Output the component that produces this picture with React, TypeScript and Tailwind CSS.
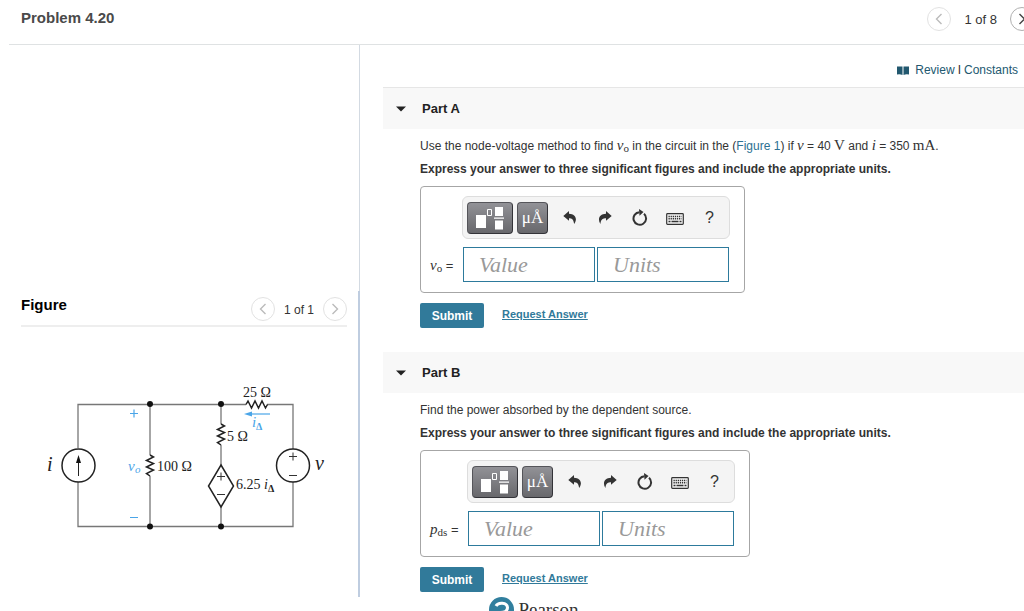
import { clsx } from "clsx";
import React from "react";

const Pager = ({
  label,
  nextActive = false,
  className,
}: {
  label: string;
  nextActive?: boolean;
  className?: string;
}) => {
  return (
    <nav className={clsx("flex items-center text-[#333333]", className)}>
      <button
        aria-label="Previous"
        className="size-6 rounded-full border border-[#e2e2e2] text-[#bbbbbb] flex items-center justify-center"
      >
        <svg width="8" height="12" viewBox="0 0 8 12" fill="none" stroke="currentColor" strokeWidth="1.4">
          <path d="M6.500 1 1.500 6l5 5" />
        </svg>
      </button>
      <span className="pt-0.5">{label}</span>
      <button
        aria-label="Next"
        className={clsx(
          "size-6 rounded-full border flex items-center justify-center",
          nextActive
            ? "border-[#b0b0b0] text-[#444444]"
            : "border-[#e2e2e2] text-[#bbbbbb]"
        )}
      >
        <svg width="8" height="12" viewBox="0 0 8 12" fill="none" stroke="currentColor" strokeWidth="1.4">
          <path d="M1.500 1l5 5-5 5" />
        </svg>
      </button>
    </nav>
  );
};

const MathVar = ({ children, sub }: { children: string; sub?: string }) => (
  <span className="font-['Liberation_Serif',serif] text-[15px] leading-none">
    <i>{children}</i>
    {sub && <span className="relative top-0.5 text-[11px]">{sub}</span>}
  </span>
);

const Unit = ({ children }: { children: string }) => (
  <span className="font-['Liberation_Serif',serif] text-[15px] leading-none">
    {children}
  </span>
);

const toolButton = "w-[35px] h-8 flex items-center justify-center text-[#333333]";
const darkButton =
  "h-8 rounded-[4px] border border-[#55555a] border-b-[#333338] border-r-[#333338] bg-gradient-to-b from-[#929297] to-[#68686c] text-white flex items-center justify-center";

const Toolbar = () => {
  return (
    <div className="flex items-center h-[43px] w-[268px] pl-1 rounded-[6px] border border-[#dddddd] bg-[#f4f4f4]">
      <button aria-label="Templates" className={clsx(darkButton, "w-[46px] mr-1")}>
        <svg width="28" height="26" viewBox="0 0 28 26">
          <path d="M0 10h10v13H0z" fill="white" />
          <path d="M11.500 4.500h4v6h-4z" fill="none" stroke="white" />
          <path d="M19 2h8v9h-8zM18 12.500h10v1.200H18zM19 15.500h8v9h-8z" fill="white" />
        </svg>
      </button>
      <button
        aria-label="Units"
        className={clsx(
          darkButton,
          "w-[31px] mr-1 font-['Liberation_Serif',serif] text-[17px]"
        )}
      >
        μÅ
      </button>
      <button aria-label="Undo" className={toolButton}>
        <svg width="14" height="14" viewBox="0 0 14 14" fill="currentColor">
          <path d="M6 0 0.300 5 6 9.800V7.200C8.800 7.200 10.400 8.200 11.200 13 14.800 8 12.500 3 6 2.800Z" />
        </svg>
      </button>
      <button aria-label="Redo" className={toolButton}>
        <svg width="14" height="14" viewBox="0 0 14 14" fill="currentColor">
          <path d="M8 0 13.700 5 8 9.800V7.200C5.200 7.200 2.800 8.200 2.400 13-0.800 8 1.500 3 8 2.800Z" />
        </svg>
      </button>
      <button aria-label="Reset" className={toolButton}>
        <svg width="16" height="18" viewBox="0 0 16 18">
          <path
            d="M12 4.800A6.300 6.300 0 1 1 7.500 3.200"
            fill="none"
            stroke="currentColor"
            strokeWidth="2"
          />
          <path d="M7 0 11.500 3 7.500 6.800Z" fill="currentColor" />
        </svg>
      </button>
      <button aria-label="Keyboard" className={toolButton}>
        <svg
          width="18"
          height="12"
          viewBox="0 0 18 12"
          className="mt-0.5"
          fill="none"
          stroke="currentColor"
        >
          <rect x="0.7" y="0.7" width="16.6" height="10.6" rx="0.8" strokeWidth="1.2" />
          <path d="M2.5 3.5h13M2.5 5.7h13" strokeWidth="1.4" strokeDasharray="1.3 0.8" />
          <path d="M2.5 8.5h2M5.5 8.5h7M13.5 8.5h2" strokeWidth="1.4" />
        </svg>
      </button>
      <button aria-label="Help" className={clsx(toolButton, "text-base")}>
        ?
      </button>
    </div>
  );
};

const fieldClass =
  "w-[132px] h-[35px] border border-[#2d7a9c] bg-white pl-[15px] font-['Liberation_Serif',serif] italic text-[22px] text-[#333333] placeholder:text-[#999999] outline-none";

const AnswerBox = ({
  id,
  symbol,
  sub,
  labelClass,
}: {
  id: string;
  symbol: string;
  sub: string;
  labelClass: string;
}) => {
  return (
    <div className="flex items-end w-fit h-[107px] mt-[5px] pt-[9px] pb-[10px] pl-[9px] pr-[14px] rounded-[4px] border border-[#a6a6a6]">
      <label
        htmlFor={id}
        className={clsx("h-[35px] pt-[7px] text-[13px] whitespace-nowrap", labelClass)}
      >
        <MathVar sub={sub}>{symbol}</MathVar> =
      </label>
      <div className="flex flex-col gap-2">
        <Toolbar />
        <div className="flex gap-0.5 pl-px">
          <input id={id} placeholder="Value" className={fieldClass} />
          <input aria-label="Units" placeholder="Units" className={fieldClass} />
        </div>
      </div>
    </div>
  );
};

const Part = ({
  title,
  className,
  children,
}: {
  title: string;
  className?: string;
  children: React.ReactNode;
}) => {
  return (
    <section>
      <h2
        className={clsx(
          "flex items-center gap-4 pl-[13px] bg-[#f8f8f8] text-[13px] font-bold text-[#222222]",
          className
        )}
      >
        <svg width="10" height="6" viewBox="0 0 10 6" fill="currentColor">
          <path d="M0 0.5h10L5 5.5z" />
        </svg>
        {title}
      </h2>
      <div className="pl-[37px] pt-[6px] text-xs leading-[23px]">
        {children}
        <div className="flex items-start gap-[18px] mt-[10px]">
          <button className="w-16 h-[25px] rounded-[2px] bg-[#317a9a] text-white text-xs font-bold">
            Submit
          </button>
          <a
            href="#"
            className="text-[11px] font-bold text-[#317a9a] underline underline-offset-1"
          >
            Request Answer
          </a>
        </div>
      </div>
    </section>
  );
};

const Circuit = () => {
  return (
    <svg
      width="290"
      height="150"
      viewBox="45 383 290 150"
      fill="none"
      className="font-['Liberation_Serif',serif]"
      role="img"
      aria-label="Circuit diagram"
    >
      {/* wires */}
      <g stroke="#777777" strokeWidth="1.3">
        <path d="M78 448V404.5H246M267 404.5H293V449M293 482V526.5H78V482" />
        <path d="M150 404V455M150 476V526M221 404V424M221 445V465M221 507V526" />
      </g>
      {/* resistors */}
      <g stroke="#222222" strokeWidth="1.5">
        <path d="M150 455l3.500 2-7 3.500 7 3-7 3.500 7 3-7 3.500 3.500 2.500" />
        <path d="M221 424l3.500 2-7 3.500 7 3-7 3.500 7 3-7 3.500 3.500 2.500" />
        <path d="M246 404.500l2-3.500 3.500 7 3.500-7 3.500 7 3.500-7 3.500 7 2-3.500" />
      </g>
      {/* sources */}
      <g stroke="#222222" strokeWidth="1.5">
        <circle cx="78.500" cy="465.500" r="16.500" />
        <circle cx="293" cy="465.500" r="16.500" />
        <path d="M221 465l12.500 21L221 507l-12.500-21z" />
      </g>
      <path d="M78.500 476V462" stroke="#222222" />
      <path d="M78.500 455l2.500 8h-5z" fill="#111111" />
      <path
        d="M289 456.500h8M293 452.500v8M289 475.500h8M217 476.500h8M221 472.500v8M217 494.500h8"
        stroke="#333333"
      />
      <g fill="#111111">
        <circle cx="150" cy="404" r="3" />
        <circle cx="221" cy="404" r="3" />
        <circle cx="150" cy="526.500" r="3" />
        <circle cx="221" cy="526.500" r="3" />
      </g>
      {/* reference polarity and current */}
      <path d="M130 413.500h8M134 409.500v8M130 517.500h8" stroke="#4aa5e8" strokeWidth="1.2" />
      <path d="M250 414h20" stroke="#4aa5e8" strokeWidth="1.2" />
      <path d="M244 414l8-2.500v5z" fill="#4aa5e8" />
      <g fill="#4aa5e8" fontStyle="italic" fontSize="15">
        <text x="128" y="471">v</text>
        <text x="135" y="473" fontSize="11">o</text>
        <text x="252" y="427">i</text>
        <text x="256" y="430" fontSize="10" fontWeight="bold" fontStyle="normal">Δ</text>
      </g>
      <g fill="#222222" fontSize="14">
        <text x="157" y="471">100 Ω</text>
        <text x="243" y="397">25 Ω</text>
        <text x="227" y="441">5 Ω</text>
        <text x="236" y="489">6.25 <tspan fontStyle="italic">i</tspan></text>
        <text x="268" y="492" fontSize="10" fontWeight="bold">Δ</text>
        <text x="47" y="471" fontSize="20" fontStyle="italic">i</text>
        <text x="315" y="470" fontSize="20" fontStyle="italic">v</text>
      </g>
    </svg>
  );
};

const App = () => {
  return (
    <div className="h-screen overflow-hidden bg-white font-['Liberation_Sans',Arial,sans-serif] text-[#333333]">
      <header className="flex items-start justify-between h-[45px] ml-[9px] pl-3 border-b border-[#dfe2e3]">
        <h1 className="pt-[7px] text-[15px] leading-[22px] font-bold text-[#4a4a4a]">
          Problem 4.20
        </h1>
        <Pager
          label="1 of 8"
          nextActive
          className="mt-[7px] -mr-[10px] gap-[13px] shrink-0 text-[13px]"
        />
      </header>

      <div className="flex">
        <aside className="flex flex-col w-[360px] shrink-0">
          <div className="h-[246px] border-r border-[#d3dae2]" />
          <div className="grow border-r-2 border-[#bfcde0]">
            <div className="flex items-start justify-between ml-[21px] mr-[11px] h-9 border-b-2 border-[#eeeeee]">
              <h2 className="pt-[3px] text-[15px] leading-[22px] font-bold text-black">
                Figure
              </h2>
              <Pager label="1 of 1" className="mt-[6px] gap-[9px] text-xs" />
            </div>
            <div className="pl-[45px] pt-14">
              <Circuit />
            </div>
          </div>
        </aside>

        <main className="grow min-w-0 pl-[23px] pb-[5px]">
          <div className="flex items-center justify-end h-[42px] pr-[6px] pt-2 text-xs text-[#22586f]">
            <svg width="12" height="9" viewBox="0 0 12 9" fill="#22586f" className="mr-[6px]">
              <path d="M0 0.500h5.500V9Q3 7.800 0 8.500zM6.500 0.500H12V8.500Q9 7.800 6.500 9z" />
            </svg>
            <a href="#">Review</a>
            <span className="px-[3px] text-[#333333]">I</span>
            <a href="#">Constants</a>
          </div>

          <Part title="Part A" className="h-[42px] border-t border-[#e6e6e6]">
            <p>
              Use the node-voltage method to find <MathVar sub="o">v</MathVar> in
              the circuit in the (
              <a href="#" className="text-[#2d7193]">
                Figure 1
              </a>
              ) if <MathVar>v</MathVar> = 40 <Unit>V</Unit> and{" "}
              <MathVar>i</MathVar> = 350 <Unit>mA</Unit>.
            </p>
            <p className="font-bold">
              Express your answer to three significant figures and include the
              appropriate units.
            </p>
            <AnswerBox id="vo" symbol="v" sub="o" labelClass="w-8" />
          </Part>

          <div className="h-6" />

          <Part title="Part B" className="h-[41px]">
            <p>Find the power absorbed by the dependent source.</p>
            <p className="font-bold">
              Express your answer to three significant figures and include the
              appropriate units.
            </p>
            <AnswerBox id="pds" symbol="p" sub="ds" labelClass="w-[37px]" />
          </Part>
        </main>
      </div>

      <footer className="flex items-start justify-center gap-1 pl-[44px] text-[#333333]">
        <svg width="25" height="25" viewBox="0 0 25 25">
          <circle cx="12.500" cy="12.500" r="12.500" fill="#317f9e" />
          <path
            d="M7 9C9 5 18 5 18.500 10.500 18.500 14.500 14 15.500 11.500 15.500V20"
            fill="none"
            stroke="white"
            strokeWidth="3"
          />
        </svg>
        <span className="font-['Liberation_Serif',serif] text-[19px] leading-[25px]">
          Pearson
        </span>
      </footer>
    </div>
  );
};

export default App;
